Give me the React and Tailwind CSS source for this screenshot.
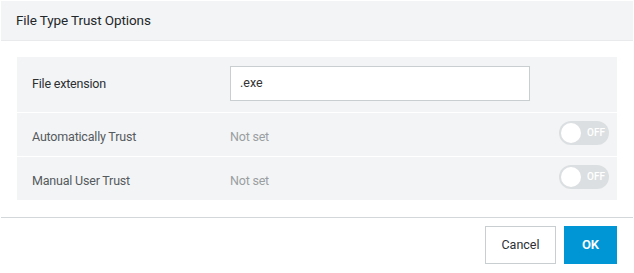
import React from "react";

function Toggle() {
  return (
    <div className="flex h-[24px] w-[50px] items-center rounded-full bg-[#dcdfe1] px-[2px]">
      <span className="h-[20px] w-[20px] rounded-full bg-white" />
      <span className="ml-[6px] text-[10px] font-medium leading-none text-white">OFF</span>
    </div>
  );
}

function Row({ label, children, muted, className = "" }) {
  return (
    <div className={`flex items-center bg-[#f3f4f5] pl-[15px] pr-[8px] ${className}`}>
      <div
        className={`w-[198px] text-[12.5px] tracking-[-0.2px] ${
          muted ? "pt-[5px] text-[#555a5e]" : "text-[#2b2f33]"
        }`}
      >
        {label}
      </div>
      {children}
    </div>
  );
}

export default function App() {
  return (
    <div
      className="h-[273px] w-[634px] bg-white"
      style={{ fontFamily: "Roboto, 'Liberation Sans', sans-serif" }}
    >
      <div className="ml-[1px] mt-[1px] flex h-[40px] w-[632px] items-center border-b border-[#e8eaeb] bg-[#f3f4f5] pl-[15px] text-[13.5px] tracking-[-0.1px] text-[#23272a]">
        File Type Trust Options
      </div>
      <div className="ml-[17px] mt-[16px] flex w-[600px] flex-col gap-[1px] bg-white">
        <Row label="File extension" className="h-[55px]">
          <div className="mb-[3px] flex h-[35px] w-[300px] items-center border border-[#c9ced1] bg-white pl-[9px] text-[12.5px] text-[#333]">
            .exe
          </div>
        </Row>
        <Row label="Automatically Trust" muted className="h-[43px]">
          <span className="pt-[5px] text-[12.5px] tracking-[-0.2px] text-[#9a9ea1]">Not set</span>
          <div className="-mt-[3px] ml-auto">
            <Toggle />
          </div>
        </Row>
        <Row label="Manual User Trust" muted className="h-[43px]">
          <span className="pt-[5px] text-[12.5px] tracking-[-0.2px] text-[#9a9ea1]">Not set</span>
          <div className="-mt-[3px] ml-auto">
            <Toggle />
          </div>
        </Row>
      </div>
      <div className="ml-[1px] mt-[17px] w-[632px] border-t border-[#d3d7da]" />
      <div className="mr-[17px] mt-[8px] flex justify-end gap-[8px]">
        <button className="h-[38px] w-[71px] border border-[#c9ced1] bg-white text-[12.5px] text-[#2b2f33]">
          Cancel
        </button>
        <button className="h-[38px] w-[53px] bg-[#0096d6] text-[13px] font-semibold text-white">
          OK
        </button>
      </div>
    </div>
  );
}
